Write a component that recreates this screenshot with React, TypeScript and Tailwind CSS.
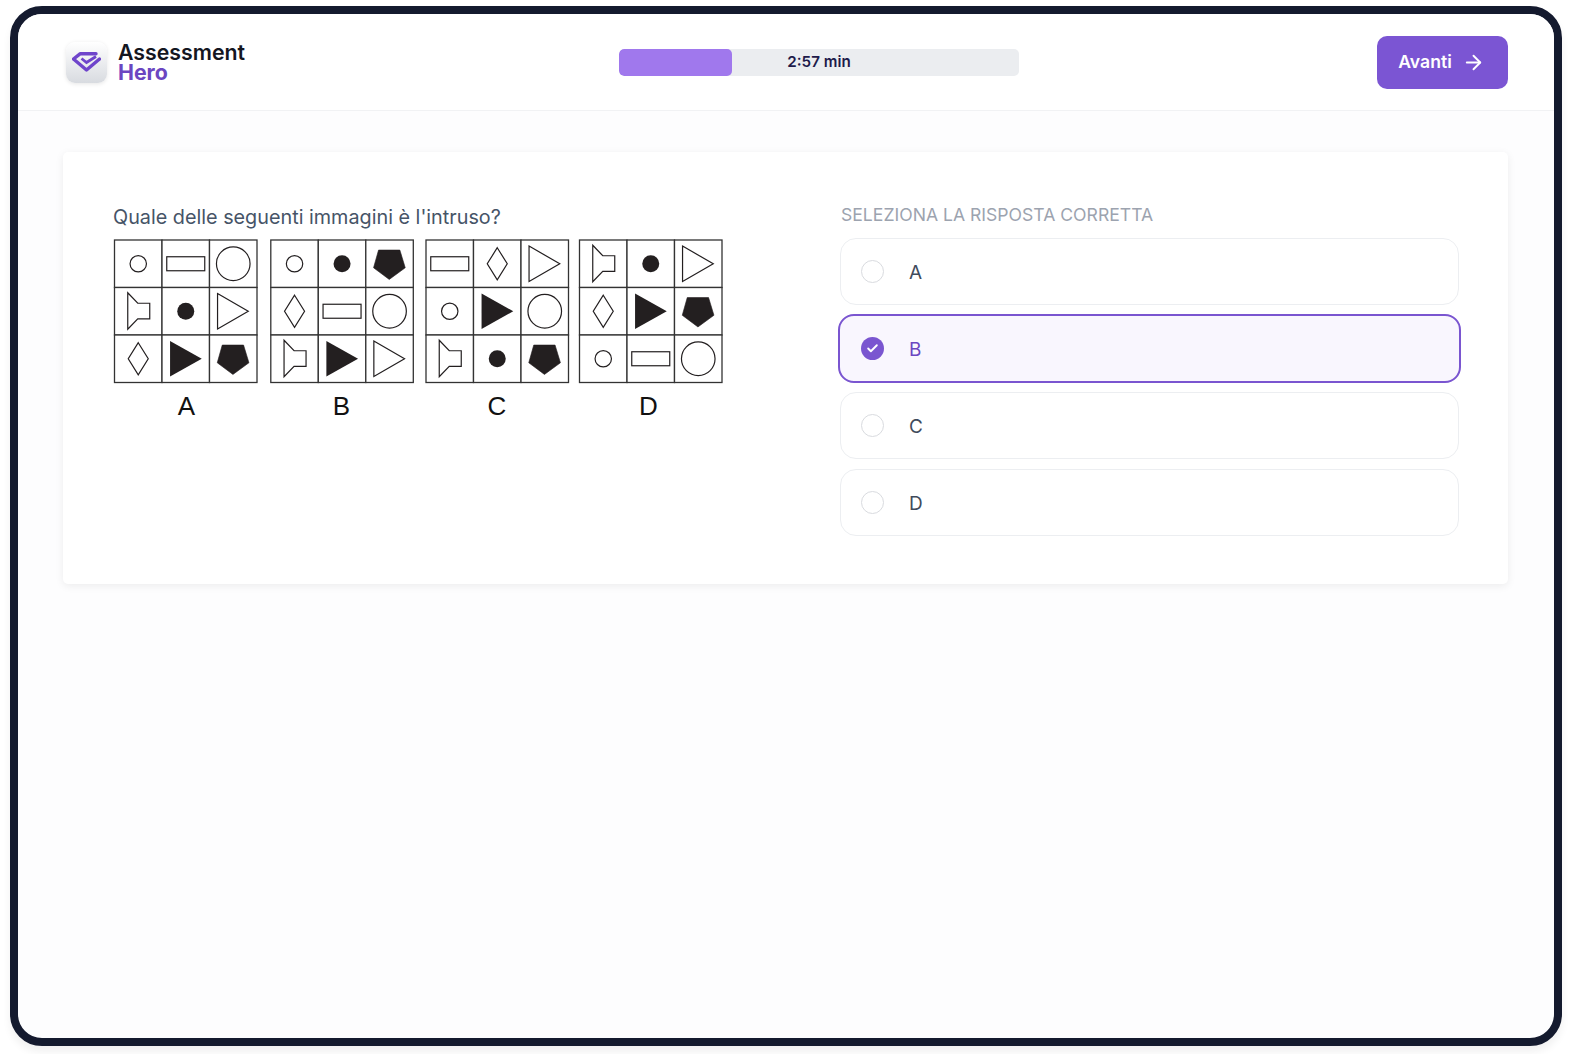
import { ArrowRight, Check } from "lucide-react";

type ShapeName =
  | "circle"
  | "rect"
  | "bigCircle"
  | "funnel"
  | "dot"
  | "tri"
  | "diamond"
  | "blackTri"
  | "pent";

const CELL = 47.5;
const INK = "#231f20";

const matrices: { label: string; x: number; labelX: number; cells: ShapeName[] }[] = [
  {
    label: "A",
    x: 1.5,
    labelX: 73.5,
    cells: ["circle", "rect", "bigCircle", "funnel", "dot", "tri", "diamond", "blackTri", "pent"],
  },
  {
    label: "B",
    x: 157.8,
    labelX: 228.5,
    cells: ["circle", "dot", "pent", "diamond", "rect", "bigCircle", "funnel", "blackTri", "tri"],
  },
  {
    label: "C",
    x: 313,
    labelX: 384,
    cells: ["rect", "diamond", "tri", "circle", "blackTri", "bigCircle", "funnel", "dot", "pent"],
  },
  {
    label: "D",
    x: 466.5,
    labelX: 535.5,
    cells: ["funnel", "dot", "tri", "diamond", "blackTri", "pent", "circle", "rect", "bigCircle"],
  },
];

function Shape({ name, cx, cy }: { name: ShapeName; cx: number; cy: number }) {
  const t = `translate(${cx} ${cy})`;
  const line = { fill: "white", stroke: INK, strokeWidth: 1.2 };
  switch (name) {
    case "circle":
      return <circle transform={t} r={8.2} {...line} />;
    case "dot":
      return <circle transform={t} r={8.5} fill={INK} />;
    case "bigCircle":
      return <circle transform={t} r={16.8} {...line} />;
    case "rect":
      return <rect transform={t} x={-19} y={-7} width={38} height={14} {...line} />;
    case "funnel":
      return (
        <polygon
          transform={t}
          points="-10.5,-18.5 -0.5,-8 11.5,-8 11.5,7.7 -0.5,7.7 -10.5,18"
          {...line}
        />
      );
    case "tri":
      return <polygon transform={t} points="-15.7,-17.7 15,0 -15.7,17.7" {...line} />;
    case "blackTri":
      return <polygon transform={t} points="-15.7,-17.7 16,0 -15.7,17.7" fill={INK} />;
    case "diamond":
      return <polygon transform={t} points="0,-16 10,0 0,16 -10,0" {...line} />;
    case "pent":
      return (
        <polygon
          transform={t}
          points="-11,-13.7 10.3,-13.7 15.7,4 -0.3,15.7 -16,4"
          fill={INK}
          stroke={INK}
          strokeWidth={0.6}
        />
      );
  }
}

function Puzzle() {
  return (
    <svg width="612" height="184" viewBox="0 0 612 184" className="block mt-[9px]">
      {matrices.map((m) => (
        <g key={m.label}>
          {m.cells.map((s, i) => {
            const col = i % 3;
            const row = Math.floor(i / 3);
            const x = m.x + col * CELL;
            const y = 1 + row * CELL;
            return (
              <g key={i}>
                <rect x={x} y={y} width={CELL} height={CELL} fill="white" stroke="#333" strokeWidth={1.3} />
                <Shape name={s} cx={x + CELL / 2} cy={y + CELL / 2} />
              </g>
            );
          })}
          <text
            x={m.labelX}
            y={175.5}
            textAnchor="middle"
            fontSize={26}
            fill="#111"
            fontFamily='"Liberation Sans", Arial, sans-serif'
          >
            {m.label}
          </text>
        </g>
      ))}
    </svg>
  );
}

function Option({ label, selected = false }: { label: string; selected?: boolean }) {
  return (
    <div
      className={`flex items-center rounded-[16px] ${
        selected
          ? "h-[69px] -my-px border-[2.5px] border-[#7a55d0] bg-[#f9f6fe] text-[#6b46c1] -mx-[2px] pl-[21px]"
          : "h-[67px] border border-[#eceef1] bg-white text-[#3f4b5c] pl-[20px]"
      }`}
    >
      {selected ? (
        <span className="w-[23px] h-[23px] rounded-full bg-[#7a55d0] flex items-center justify-center">
          <Check className="w-[13px] h-[13px] text-white" strokeWidth={3.5} />
        </span>
      ) : (
        <span className="w-[23px] h-[23px] rounded-full border-[1.5px] border-[#d9dbdf] bg-white" />
      )}
      <span className="ml-[25px] text-[19px] leading-[24px] pt-[2px]">{label}</span>
    </div>
  );
}

export default function App() {
  return (
    <div className="w-[1569px] h-[1054px] bg-white pl-[10px] pt-[6px] font-['Inter',sans-serif] overflow-hidden">
      <div className="w-[1552px] h-[1040px] border-8 border-[#141a2e] rounded-[32px] bg-[#fdfdfe] overflow-hidden flex flex-col shadow-[0_6px_8px_rgba(0,0,0,0.06)]">
        <header className="h-[97px] shrink-0 bg-white border-b border-[#f1f2f4] flex items-center pl-[48px] pr-[46px]">
          <div className="flex items-center w-[553px] shrink-0">
            <div className="w-[41px] h-[41px] rounded-[9px] bg-gradient-to-b from-white to-[#d8dbe0] shadow-[0_1px_4px_rgba(0,0,0,0.1)] flex items-center justify-center">
              <svg width="29" height="20" viewBox="0 0 29 20">
                <path
                  d="M1.5 7L14.5 18L27.5 7M1.5 7L8 1.8H24"
                  fill="none"
                  stroke="#6f45cb"
                  strokeWidth="3.4"
                  strokeLinejoin="round"
                  strokeLinecap="round"
                />
                <path d="M9.5 6.5L14.5 10.5L24 4.5" fill="none" stroke="#6f45cb" strokeWidth="2.8" />
              </svg>
            </div>
            <div className="ml-[11px] flex flex-col">
              <span className="text-[21.3px] leading-[20px] font-semibold text-[#14161f]">Assessment</span>
              <span className="text-[21.3px] leading-[20px] font-bold text-[#6b46c1]">Hero</span>
            </div>
          </div>

          <div className="relative w-[400px] shrink-0 h-[27px] rounded-[5px] bg-[#ebedf0] overflow-hidden flex items-center justify-center">
            <div className="absolute left-0 top-0 bottom-0 w-[113px] rounded-[5px] bg-[#a078ed]" />
            <span className="relative text-[15.2px] font-semibold text-[#1e1b4b]">2:57 min</span>
          </div>

          <div className="flex-1 flex justify-end">
            <button className="w-[131px] h-[53px] rounded-[10px] bg-[#7b55d3] text-white flex items-center justify-center gap-[10px] text-[17.6px] font-semibold pr-[2px]">
              Avanti
              <ArrowRight className="w-[23px] h-[23px]" strokeWidth={2} />
            </button>
          </div>
        </header>

        <main className="flex-1 pt-[41px] pl-[45px] pr-[46px]">
          <section className="h-[432px] rounded-[5px] bg-white shadow-[0_2px_8px_rgba(0,0,0,0.07)] flex pl-[50px] pr-[49px]">
            <div className="w-[727px] pt-[52px]">
              <p className="text-[19.8px] leading-[26px] text-[#465467]">
                Quale delle seguenti immagini è l'intruso?
              </p>
              <Puzzle />
            </div>
            <div className="flex-1 pt-[51px]">
              <p className="text-[17.6px] leading-[24px] text-[#9ca3af] uppercase mb-[11px] pl-px">
                Seleziona la risposta corretta
              </p>
              <div className="flex flex-col gap-[10px]">
                <Option label="A" />
                <Option label="B" selected />
                <Option label="C" />
                <Option label="D" />
              </div>
            </div>
          </section>
        </main>
      </div>
    </div>
  );
}
